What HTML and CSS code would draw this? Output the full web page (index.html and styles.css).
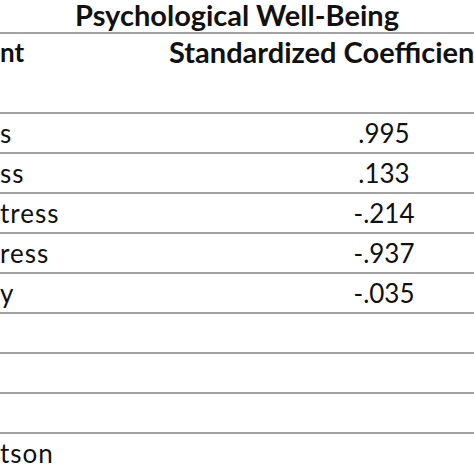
FILE: index.html
```html
<!DOCTYPE html>
<html>
<head>
<meta charset="utf-8">
<link rel="stylesheet" href="styles.css">
</head>
<body>
<div class="table">
  <div class="title">Psychological Well-Being</div>
  <div class="grid">
    <div class="cell head label">nt</div>
    <div class="cell head value">Standardized Coefficients</div>

    <div class="cell label">s</div>
    <div class="cell value">.995</div>

    <div class="cell label">ss</div>
    <div class="cell value">.133</div>

    <div class="cell label">tress</div>
    <div class="cell value">-.214</div>

    <div class="cell label">ress</div>
    <div class="cell value">-.937</div>

    <div class="cell label">y</div>
    <div class="cell value">-.035</div>

    <div class="cell label"></div>
    <div class="cell value"></div>

    <div class="cell label"></div>
    <div class="cell value"></div>

    <div class="cell label"></div>
    <div class="cell value"></div>

    <div class="cell label last">tson</div>
    <div class="cell value last"></div>
  </div>
</div>
</body>
</html>
```
FILE: styles.css
```css
html, body {
  margin: 0;
  padding: 0;
  background: #ffffff;
}
body {
  width: 474px;
  height: 474px;
  overflow: hidden;
  font-family: Lato, "Liberation Sans", sans-serif;
  color: #111111;
}
.table {
  width: 474px;
  overflow: hidden;
}
.title {
  height: 32px;
  line-height: 1;
  font-size: 29px;
  font-weight: 700;
  text-align: center;
  border-bottom: 2px solid #a2a2a2;
  white-space: nowrap;
}
.grid {
  display: grid;
  grid-template-columns: 168px 432px;
  width: 600px;
}
.cell {
  height: 38px;
  line-height: 38px;
  font-size: 26px;
  border-bottom: 2px solid #a2a2a2;
  white-space: nowrap;
}
.cell.head {
  height: 77px;
  padding-top: 1px;
  line-height: 1.2;
  font-size: 29px;
  font-weight: 700;
}
.label {
  text-align: left;
  letter-spacing: 1px;
}
.head.label {
  letter-spacing: 0;
  font-size: 26px;
  padding-top: 3px;
  height: 75px;
}
.value {
  text-align: center;
}
.head.value {
  text-align: left;
  padding-left: 1px;
}
.cell.last {
  border-bottom: none;
}
```
